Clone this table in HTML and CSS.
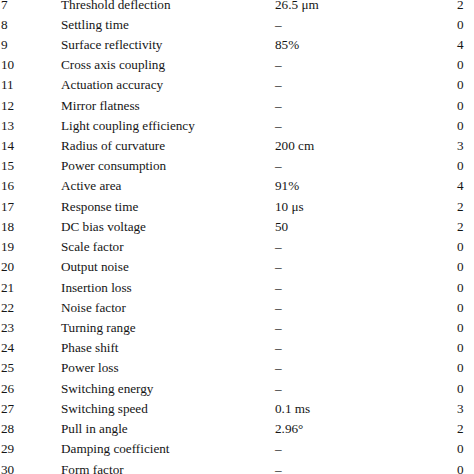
FILE: index.html
```html
<!DOCTYPE html>
<html>
<head>
<meta charset="utf-8">
<link rel="stylesheet" href="styles.css">
</head>
<body>
<div class="table">
  <div class="row"><span class="n">7</span><span class="p">Threshold deflection</span><span class="v">26.5 μm</span><span class="s">2</span></div>
  <div class="row"><span class="n">8</span><span class="p">Settling time</span><span class="v">–</span><span class="s">0</span></div>
  <div class="row"><span class="n">9</span><span class="p">Surface reflectivity</span><span class="v">85%</span><span class="s">4</span></div>
  <div class="row"><span class="n">10</span><span class="p">Cross axis coupling</span><span class="v">–</span><span class="s">0</span></div>
  <div class="row"><span class="n">11</span><span class="p">Actuation accuracy</span><span class="v">–</span><span class="s">0</span></div>
  <div class="row"><span class="n">12</span><span class="p">Mirror flatness</span><span class="v">–</span><span class="s">0</span></div>
  <div class="row"><span class="n">13</span><span class="p">Light coupling efficiency</span><span class="v">–</span><span class="s">0</span></div>
  <div class="row"><span class="n">14</span><span class="p">Radius of curvature</span><span class="v">200 cm</span><span class="s">3</span></div>
  <div class="row"><span class="n">15</span><span class="p">Power consumption</span><span class="v">–</span><span class="s">0</span></div>
  <div class="row"><span class="n">16</span><span class="p">Active area</span><span class="v">91%</span><span class="s">4</span></div>
  <div class="row"><span class="n">17</span><span class="p">Response time</span><span class="v">10 μs</span><span class="s">2</span></div>
  <div class="row"><span class="n">18</span><span class="p">DC bias voltage</span><span class="v">50</span><span class="s">2</span></div>
  <div class="row"><span class="n">19</span><span class="p">Scale factor</span><span class="v">–</span><span class="s">0</span></div>
  <div class="row"><span class="n">20</span><span class="p">Output noise</span><span class="v">–</span><span class="s">0</span></div>
  <div class="row"><span class="n">21</span><span class="p">Insertion loss</span><span class="v">–</span><span class="s">0</span></div>
  <div class="row"><span class="n">22</span><span class="p">Noise factor</span><span class="v">–</span><span class="s">0</span></div>
  <div class="row"><span class="n">23</span><span class="p">Turning range</span><span class="v">–</span><span class="s">0</span></div>
  <div class="row"><span class="n">24</span><span class="p">Phase shift</span><span class="v">–</span><span class="s">0</span></div>
  <div class="row"><span class="n">25</span><span class="p">Power loss</span><span class="v">–</span><span class="s">0</span></div>
  <div class="row"><span class="n">26</span><span class="p">Switching energy</span><span class="v">–</span><span class="s">0</span></div>
  <div class="row"><span class="n">27</span><span class="p">Switching speed</span><span class="v">0.1 ms</span><span class="s">3</span></div>
  <div class="row"><span class="n">28</span><span class="p">Pull in angle</span><span class="v">2.96°</span><span class="s">2</span></div>
  <div class="row"><span class="n">29</span><span class="p">Damping coefficient</span><span class="v">–</span><span class="s">0</span></div>
  <div class="row"><span class="n">30</span><span class="p">Form factor</span><span class="v">–</span><span class="s">0</span></div>
</div>
</body>
</html>
```
FILE: styles.css
```css
html, body {
  margin: 0;
  padding: 0;
  background: #ffffff;
  overflow: hidden;
}
body {
  font-family: "Liberation Serif", "Times New Roman", serif;
  font-size: 13.2px;
  color: #151515;
}
.table {
  margin-top: -5.5px;
  display: flex;
  flex-direction: column;
}
.row {
  display: grid;
  grid-template-columns: 61px 214px 182px 17px;
  height: 20.22px;
  line-height: 20.22px;
  white-space: nowrap;
}
.n { padding-left: 1px; }
```
